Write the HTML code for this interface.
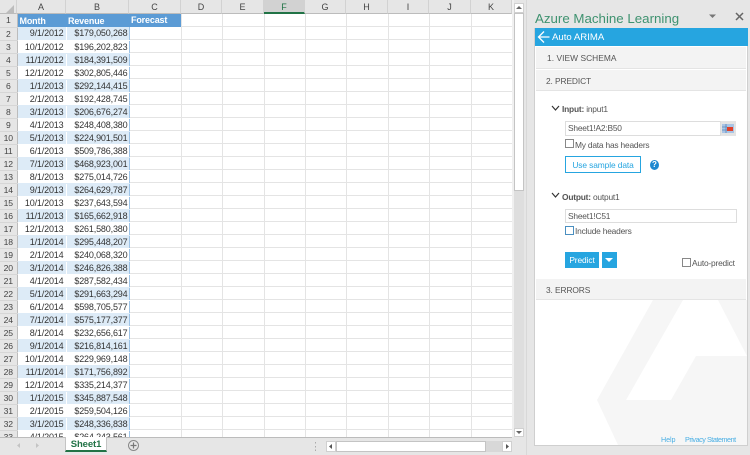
<!DOCTYPE html>
<html><head><meta charset="utf-8"><style>
html,body{margin:0;padding:0;background:#e6e6e6}
body{width:750px;height:455px;overflow:hidden;position:relative;font-family:"Liberation Sans",sans-serif;color:#444}
#all{left:0;top:0;width:750px;height:455px;background:#e6e6e6;overflow:hidden;filter:blur(.3px)}
div,span,svg{position:absolute;box-sizing:border-box}
#grid{left:17px;top:14px;width:495px;height:423px;background:#fff repeating-linear-gradient(to bottom,transparent 0,transparent 12px,#e4e4e4 12px,#e4e4e4 13px)}
.v{top:14px;width:1px;height:423px;background:#e4e4e4}
.h{top:0;height:14px;background:#e6e6e6;border-right:1px solid #d2d2d2;border-bottom:1px solid #bcbcbc;font-size:9px;line-height:14px;text-align:center;color:#444}
table{position:absolute;left:0;top:14px;border-collapse:collapse;table-layout:fixed;width:129px;font-size:9px;letter-spacing:-.16px;color:#333}
td{height:13px;padding:0;line-height:12px;overflow:hidden;white-space:nowrap;text-align:right;border-bottom:1px solid #e4e4e4;box-sizing:border-box}
td:first-child{width:17px;background:#e6e6e6;text-align:center;border-bottom:1px solid #d6d6d6;border-right:1px solid #bcbcbc;color:#444;font-size:8.6px}
td:nth-child(2){width:49px;padding-right:2px;border-right:1px solid #fff}
td:nth-child(3){width:63px;padding-right:1px;border-right:1px solid #9dc3e6}
tr:nth-child(even) td:nth-child(n+2){background:#ddebf7;border-bottom-color:#fff}
tr:nth-child(odd) td:nth-child(n+2){background:#fff;border-bottom-color:#ddebf7}
tr.t td:nth-child(n+2){background:#5b9bd5;color:#fff;font-weight:bold;text-align:left;padding-left:2px;border:0}
#clip{left:0;top:0;width:512px;height:437px;overflow:hidden}
.lab{font-size:8.4px;letter-spacing:-.2px;white-space:nowrap;color:#555;line-height:10px}
.bar{left:536px;width:210px;background:#f3f3f3;border-bottom:1px solid #e4e4e4;font-size:8.4px;letter-spacing:-.1px;color:#555;line-height:22px;padding-left:10px}
.box{background:#fff;border:1px solid #ddd;font-size:8.4px;letter-spacing:-.2px;color:#555;line-height:12px;padding-left:2px}
.cb{width:9px;height:9px;border:1px solid #888;background:#fff}
</style></head><body>
<div id="all">

<div id="clip">
<div id="grid"></div>
<div class="v" style="left:181px"></div><div class="v" style="left:222px"></div><div class="v" style="left:264px"></div><div class="v" style="left:305px"></div><div class="v" style="left:346px"></div><div class="v" style="left:388px"></div><div class="v" style="left:429px"></div><div class="v" style="left:471px"></div><div class="v" style="left:129px"></div>
<div class="h" style="left:0;width:17px"></div>
<svg style="left:6px;top:5px" width="9" height="9"><path d="M8 0V8H0Z" fill="#bcbcbc"/></svg>
<div class="h" style="left:17px;width:49px">A</div>
<div class="h" style="left:66px;width:63px">B</div>
<div class="h" style="left:129px;width:52px">C</div>
<div class="h" style="left:181px;width:41px">D</div>
<div class="h" style="left:222px;width:42px">E</div>
<div class="h" style="left:264px;width:41px;background:#d2d2d2;border-bottom:2px solid #217346;color:#217346">F</div>
<div class="h" style="left:305px;width:41px">G</div>
<div class="h" style="left:346px;width:42px">H</div>
<div class="h" style="left:388px;width:41px">I</div>
<div class="h" style="left:429px;width:42px">J</div>
<div class="h" style="left:471px;width:41px">K</div>
<div style="left:129px;top:14px;width:52px;height:13px;background:#5b9bd5;color:#fff;font-weight:bold;font-size:9px;letter-spacing:-.16px;line-height:12px;padding-left:2px">Forecast</div>
<table>
<tr class="t"><td>1</td><td>Month</td><td>Revenue</td></tr>
<tr><td>2</td><td>9/1/2012</td><td>$179,050,268</td></tr>
<tr><td>3</td><td>10/1/2012</td><td>$196,202,823</td></tr>
<tr><td>4</td><td>11/1/2012</td><td>$184,391,509</td></tr>
<tr><td>5</td><td>12/1/2012</td><td>$302,805,446</td></tr>
<tr><td>6</td><td>1/1/2013</td><td>$292,144,415</td></tr>
<tr><td>7</td><td>2/1/2013</td><td>$192,428,745</td></tr>
<tr><td>8</td><td>3/1/2013</td><td>$206,676,274</td></tr>
<tr><td>9</td><td>4/1/2013</td><td>$248,408,380</td></tr>
<tr><td>10</td><td>5/1/2013</td><td>$224,901,501</td></tr>
<tr><td>11</td><td>6/1/2013</td><td>$509,786,388</td></tr>
<tr><td>12</td><td>7/1/2013</td><td>$468,923,001</td></tr>
<tr><td>13</td><td>8/1/2013</td><td>$275,014,726</td></tr>
<tr><td>14</td><td>9/1/2013</td><td>$264,629,787</td></tr>
<tr><td>15</td><td>10/1/2013</td><td>$237,643,594</td></tr>
<tr><td>16</td><td>11/1/2013</td><td>$165,662,918</td></tr>
<tr><td>17</td><td>12/1/2013</td><td>$261,580,380</td></tr>
<tr><td>18</td><td>1/1/2014</td><td>$295,448,207</td></tr>
<tr><td>19</td><td>2/1/2014</td><td>$240,068,320</td></tr>
<tr><td>20</td><td>3/1/2014</td><td>$246,826,388</td></tr>
<tr><td>21</td><td>4/1/2014</td><td>$287,582,434</td></tr>
<tr><td>22</td><td>5/1/2014</td><td>$291,663,294</td></tr>
<tr><td>23</td><td>6/1/2014</td><td>$598,705,577</td></tr>
<tr><td>24</td><td>7/1/2014</td><td>$575,177,377</td></tr>
<tr><td>25</td><td>8/1/2014</td><td>$232,656,617</td></tr>
<tr><td>26</td><td>9/1/2014</td><td>$216,814,161</td></tr>
<tr><td>27</td><td>10/1/2014</td><td>$229,969,148</td></tr>
<tr><td>28</td><td>11/1/2014</td><td>$171,756,892</td></tr>
<tr><td>29</td><td>12/1/2014</td><td>$335,214,377</td></tr>
<tr><td>30</td><td>1/1/2015</td><td>$345,887,548</td></tr>
<tr><td>31</td><td>2/1/2015</td><td>$259,504,126</td></tr>
<tr><td>32</td><td>3/1/2015</td><td>$248,336,838</td></tr>
<tr><td>33</td><td>4/1/2015</td><td>$264,243,561</td></tr>
</table>
</div>
<div style="left:0;top:437px;width:512px;height:1px;background:#bcbcbc"></div>

<!-- vertical scrollbar -->
<div style="left:512px;top:0;width:2px;height:437px;background:#f0f0f0"></div>
<div style="left:514px;top:3px;width:10px;height:434px;background:#dedede"></div>
<div style="left:514px;top:3px;width:10px;height:10px;background:#fff;border:1px solid #d0d0d0"></div>
<svg style="left:516px;top:5px" width="6" height="6"><path d="M0 4L3 1L6 4Z" fill="#666"/></svg>
<div style="left:514px;top:13px;width:10px;height:178px;background:#fff;border:1px solid #c4c4c4"></div>
<div style="left:514px;top:428px;width:10px;height:9px;background:#fff;border:1px solid #d0d0d0"></div>
<svg style="left:516px;top:430px" width="6" height="6"><path d="M0 1L3 4L6 1Z" fill="#666"/></svg>
<div style="left:526px;top:0;width:1px;height:455px;background:#d8d8d8"></div>

<!-- sheet tabs -->
<svg style="left:15px;top:441px" width="30" height="9"><path d="M5 2L2 4.500L5 7Z" fill="#c4c4c4"/><path d="M21 2L24 4.500L21 7Z" fill="#c4c4c4"/></svg>
<div style="left:65px;top:437px;width:42px;height:15px;background:#fff;border-bottom:2px solid #217346;border-left:1px solid #c4c4c4;border-right:1px solid #c4c4c4;font-size:9.5px;font-weight:bold;letter-spacing:-.1px;color:#217346;text-align:center;line-height:16px">Sheet1</div>
<svg style="left:127px;top:439px" width="13" height="13"><circle cx="6.500" cy="6.500" r="5" fill="none" stroke="#888" stroke-width="1"/><path d="M6.500 3.500V9.500M3.500 6.500H9.500" stroke="#777" stroke-width="1.200"/></svg>
<svg style="left:314px;top:441px" width="4" height="11"><path d="M1.500 1V2.500M1.500 5V6.500M1.500 8.500V10" stroke="#aaa"/></svg>

<!-- horizontal scrollbar -->
<div style="left:326px;top:441px;width:186px;height:11px;background:#d8d8d8"></div>
<div style="left:326px;top:441px;width:10px;height:11px;background:#fff;border:1px solid #d0d0d0"></div>
<svg style="left:328px;top:443px" width="6" height="7"><path d="M4 1L1 3.500L4 6Z" fill="#555"/></svg>
<div style="left:336px;top:441px;width:150px;height:11px;background:#fff;border:1px solid #c4c4c4"></div>
<div style="left:502px;top:441px;width:10px;height:11px;background:#fff;border:1px solid #d0d0d0"></div>
<svg style="left:505px;top:443px" width="6" height="7"><path d="M1 1L4 3.500L1 6Z" fill="#555"/></svg>

<!-- task pane -->
<div style="left:535px;top:11px;font-size:13.300px;line-height:16px;color:#3f9270;white-space:nowrap">Azure Machine Learning</div>
<svg style="left:708px;top:11px" width="36" height="11"><path d="M1 3.500H8L4.500 7Z" fill="#777"/><path d="M28 2L35 9M35 2L28 9" stroke="#666" stroke-width="1.500"/></svg>
<div style="left:534px;top:28px;width:214px;height:418px;background:#fff;border:1px solid #cfcfcf"></div>
<svg style="left:535px;top:300px" width="212" height="145"><path d="M118 0L62 100L83 145H212V56H161L136 100H91L148 0Z" fill="#f6f6f6"/><path d="M183 0L212 56V0Z" fill="#f6f6f6"/></svg>
<div style="left:535px;top:28px;width:213px;height:18px;background:#26a5e0"></div>
<svg style="left:537px;top:30px" width="14" height="14"><path d="M12.500 7H2M7 1.500L1.500 7L7 12.500" fill="none" stroke="#fff" stroke-width="1.300"/></svg>
<div style="left:552px;top:31px;font-size:9.600px;line-height:14px;color:#fff;white-space:nowrap">Auto ARIMA</div>
<div class="bar" style="top:47px;height:22px;padding-left:11px;line-height:23px;letter-spacing:.05px">1. VIEW SCHEMA</div>
<div class="bar" style="top:70px;height:21px">2. PREDICT</div>
<div class="bar" style="top:279px;height:21px">3. ERRORS</div>

<svg style="left:551px;top:105px" width="10" height="7"><path d="M1 1L4.500 5L8 1" fill="none" stroke="#333" stroke-width="1.200"/></svg>
<div class="lab" style="left:562px;top:104px"><b>Input:</b> input1</div>
<div class="box" style="left:565px;top:121px;width:156px;height:15px;line-height:13px">Sheet1!A2:B50</div>
<div style="left:721px;top:121px;width:15px;height:15px;background:#e4e4e4"></div>
<svg style="left:722px;top:124px" width="13" height="10"><rect x="0" y="0" width="12" height="9" fill="#a9c4e4"/><rect x="5" y="3" width="6" height="4" fill="#e0402a"/><path d="M0 3H5M0 6H5M4 0V9" stroke="#5a86ba" stroke-width=".8"/></svg>
<div class="cb" style="left:565px;top:139px"></div>
<div class="lab" style="left:575px;top:140px">My data has headers</div>
<div style="left:565px;top:156px;width:76px;height:17px;background:#fff;border:1px solid #26a5e0;font-size:8.400px;letter-spacing:-.1px;color:#26a5e0;text-align:center;line-height:16px;white-space:nowrap">Use sample data</div>
<div style="left:650px;top:160px;width:9px;height:10px;border-radius:50%;background:#1e88d0;color:#fff;font-size:8px;font-weight:bold;text-align:center;line-height:10px">?</div>

<svg style="left:551px;top:192px" width="10" height="7"><path d="M1 1L4.500 5L8 1" fill="none" stroke="#333" stroke-width="1.200"/></svg>
<div class="lab" style="left:562px;top:192px"><b>Output:</b> output1</div>
<div class="box" style="left:565px;top:209px;width:172px;height:14px">Sheet1!C51</div>
<div class="cb" style="left:565px;top:226px;border:1.500px solid #4a8fc0"></div>
<div class="lab" style="left:575px;top:226px">Include headers</div>
<div style="left:565px;top:252px;width:34px;height:16px;background:#26a5e0;color:#fff;font-size:8.400px;letter-spacing:-.1px;text-align:center;line-height:17px">Predict</div>
<div style="left:602px;top:252px;width:15px;height:16px;background:#26a5e0"></div>
<svg style="left:605px;top:258px" width="9" height="5"><path d="M0 0H8L4 4Z" fill="#fff"/></svg>
<div class="cb" style="left:682px;top:258px"></div>
<div class="lab" style="left:692px;top:258px">Auto-predict</div>

<div class="lab" style="left:661px;top:435px;color:#4aafe4;font-size:7.200px;letter-spacing:-.1px">Help</div>
<div class="lab" style="left:685px;top:435px;color:#4aafe4;font-size:7.200px;letter-spacing:-.45px">Privacy Statement</div>
</div>
</body></html>
